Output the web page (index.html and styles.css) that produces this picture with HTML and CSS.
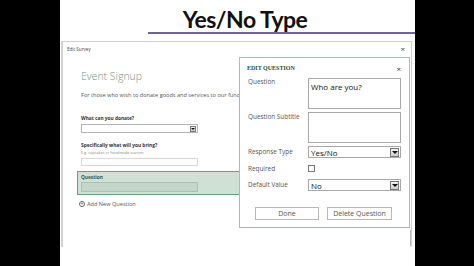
FILE: index.html
```html
<!DOCTYPE html>
<html>
<head>
<meta charset="utf-8">
<link rel="stylesheet" href="styles.css">
</head>
<body>
<div class="stage">
  <div class="slide">
    <h1 class="title">Yes/No Type</h1>
    <div class="rule"></div>
    <div class="dialog">
      <div class="dlg-head"><span>Edit Survey</span><span class="dlg-x">×</span></div>
      <div class="dlg-body">
        <div class="survey-title">Event Signup</div>
        <div class="survey-desc">For those who wish to donate goods and services to our fundraise</div>
        <div class="q-label q1">What can you donate?</div>
        <div class="fake-select"><span class="arrow"><span class="tri"></span></span></div>
        <div class="q-label q2">Specifically what will you bring?</div>
        <div class="hint">E.g. cupcakes or handmade scarves</div>
        <div class="fake-input"></div>
        <div class="q-active">
          <div class="q-label">Question</div>
          <div class="fake-input green"></div>
        </div>
        <div class="add-q"><span class="plus">+</span>Add New Question</div>
      </div>
      <div class="scroll"></div>
    </div>
    <div class="panel">
      <div class="p-head"><span>EDIT QUESTION</span><span class="p-x">×</span></div>
      <div class="p-grid">
        <div class="p-label l1">Question</div>
        <div class="p-area"><span class="p-val">Who are you?</span></div>
        <div class="p-label l2">Question Subtitle</div>
        <div class="p-area"></div>
        <div class="p-label l3">Response Type</div>
        <div class="p-select"><span>Yes/No</span><span class="arrow big"><span class="tri"></span></span></div>
        <div class="p-label l3">Required</div>
        <div class="p-check-row"><span class="p-check"></span></div>
        <div class="p-label l3">Default Value</div>
        <div class="p-select"><span>No</span><span class="arrow big"><span class="tri"></span></span></div>
      </div>
      <div class="p-buttons">
        <span class="btn done">Done</span>
        <span class="btn del">Delete Question</span>
      </div>
    </div>
  </div>
</div>
</body>
</html>
```

FILE: styles.css
```css
* { box-sizing: border-box; }
html, body { margin: 0; padding: 0; background: #000; }
body { width: 474px; height: 266px; overflow: hidden; font-family: "Open Sans", "Noto Sans", sans-serif; }
.stage { display: flex; height: 266px; }
.slide {
  margin-left: 60px;
  width: 355px;
  height: 266px;
  background: #fff;
  position: relative;
  overflow: hidden;
}
.title {
  margin: 0;
  padding: 5px 0 0 15px;
  height: 32px;
  text-align: center;
  font-family: "Lato", "Liberation Sans", sans-serif;
  font-weight: 700;
  font-size: 23px;
  line-height: 28px;
  letter-spacing: -0.5px;
  color: #111;
}
.rule {
  margin-left: 88px;
  height: 2px;
  background: #6f6398;
}
.dialog {
  margin: 7px 0 0 1px;
  width: 351px;
  height: 206px;
  border: 1px solid #cfcfcf;
  border-left: 2px solid #d2d2d2;
  border-bottom: none;
  position: relative;
}
.dlg-head {
  display: flex;
  justify-content: space-between;
  align-items: center;
  height: 13px;
  padding: 0 6px 0 4px;
  font-size: 4.6px;
  color: #444;
}
.dlg-x { font-size: 8px; color: #444; }
.dlg-body { padding: 15px 0 0 18px; }
.survey-title {
  font-size: 10.5px;
  line-height: 13px;
  color: #6f9484;
  font-weight: 300;
}
.survey-desc {
  margin-top: 8px;
  font-size: 5.6px;
  line-height: 8px;
  color: #555;
  white-space: nowrap;
}
.q-label {
  font-size: 4.8px;
  line-height: 7px;
  font-weight: 700;
  color: #333;
}
.q1 { margin-top: 16px; }
.q2 { margin-top: 9px; }
.fake-select {
  margin-top: 2px;
  width: 117px;
  height: 9px;
  border: 1px solid #b5b5b5;
  display: flex;
  justify-content: flex-end;
  align-items: center;
  padding-right: 1px;
}
.arrow {
  width: 6px;
  height: 6px;
  border: 1px solid #777;
  background: linear-gradient(#f2f2f2, #cfcfcf);
  display: flex;
  align-items: center;
  justify-content: center;
}
.arrow.big { width: 9px; height: 9px; }
.tri {
  width: 0; height: 0;
  border-left: 2px solid transparent;
  border-right: 2px solid transparent;
  border-top: 2px solid #111;
}
.arrow.big .tri { border-left-width: 3px; border-right-width: 3px; border-top-width: 3px; }
.hint {
  margin-top: 1px;
  font-size: 3.8px;
  line-height: 6px;
  color: #888;
}
.fake-input {
  margin-top: 2px;
  width: 117px;
  height: 8px;
  border: 1px solid #e0d4d4;
}
.q-active {
  margin: 5px 0 0 -4px;
  width: 240px;
  height: 24px;
  background: #cfe0d5;
  border: 1px solid #6c9c82;
  padding: 2px 0 0 3px;
}
.q-active .q-label { margin-top: 0; color: #3a5a48; }
.fake-input.green {
  margin-top: 1px;
  height: 10px;
  background: #c4d6ca;
  border-color: #aebfb4;
}
.add-q {
  margin: 5px 0 0 -2px;
  display: flex;
  align-items: center;
  font-size: 5.6px;
  line-height: 8px;
  color: #555;
}
.plus {
  width: 6px; height: 6px;
  border: 0.7px solid #666;
  border-radius: 50%;
  font-size: 5px;
  line-height: 5px;
  text-align: center;
  margin-right: 2px;
}
.scroll {
  position: absolute;
  right: 0px;
  top: 188px;
  width: 1.5px;
  height: 16px;
  background: #bbb;
}
.panel {
  position: absolute;
  left: 179px;
  top: 57px;
  width: 171px;
  height: 171px;
  background: #fff;
  border: 1.5px solid #a7bdb2;
  padding: 4px 7px 0 7px;
}
.p-head {
  display: flex;
  justify-content: space-between;
  align-items: center;
  height: 12px;
  font-family: "Liberation Serif", serif;
  font-size: 6px;
  font-weight: 700;
  color: #244d3a;
}
.p-x { font-family: "Open Sans", sans-serif; font-size: 8px; font-weight: 400; color: #333; padding-right: 1px; }
.p-grid {
  margin-top: 4px;
  display: grid;
  grid-template-columns: 61px 93px;
  row-gap: 3px;
  align-items: start;
}
.p-label {
  font-size: 6.4px;
  line-height: 8px;
  color: #555;
  padding-left: 1px;
}
.l2 { padding-top: 1px; }
.l3 { align-self: center; }
.p-area {
  height: 31px;
  border: 1px solid #a8a8a8;
  padding: 3px 2px 0;
  font-size: 8px;
  line-height: 10px;
}
.p-val { font-size: 8px; line-height: 10px; color: #111; }
.p-select {
  height: 12px;
  border: 1px solid #a8a8a8;
  display: flex;
  justify-content: space-between;
  align-items: center;
  padding: 0 1px 0 2px;
  font-size: 8px;
  color: #111;
}
.p-check-row { height: 15px; display: flex; align-items: center; }
.p-check {
  width: 7px; height: 7px;
  border: 1px solid #777;
  background: #fff;
}
.p-buttons {
  margin-top: 16px;
  display: flex;
  gap: 8px;
  padding-left: 8px;
}
.btn {
  height: 13px;
  border: 1px solid #b8b8b8;
  display: flex;
  align-items: center;
  justify-content: center;
  font-size: 7px;
  color: #555;
}
.done { width: 64px; }
.del { width: 65px; }
```
